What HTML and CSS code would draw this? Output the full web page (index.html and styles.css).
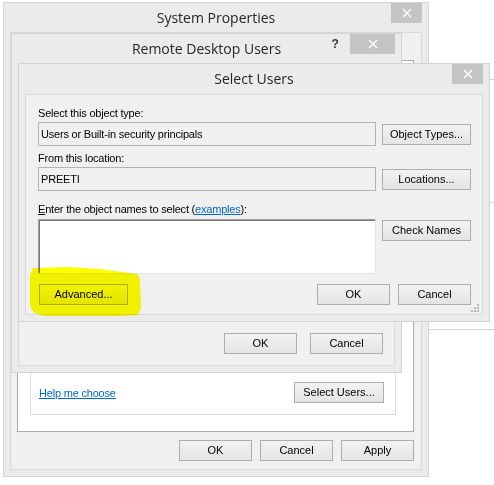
FILE: index.html
```html
<!DOCTYPE html>
<html>
<head>
<meta charset="utf-8">
<title>Select Users</title>
<link rel="stylesheet" href="styles.css">
</head>
<body>
<div class="desk">
  <div class="bgline bgline-a"></div>
  <div class="bgline bgline-b"></div>
  <div class="bgline bgline-c"></div>

  <section class="win sp">
    <header class="tb">
      <span class="ttl">System Properties</span>
      <span class="ctl">
        <span class="close"><svg width="10" height="10" viewBox="0 0 10 10"><path d="M1 1L9 9M9 1L1 9" stroke="#fff" stroke-width="1.4"/></svg></span>
      </span>
    </header>
    <div class="client sp-client">
      <div class="tabpage">
        <div class="group">
          <div class="group-row">
            <a class="link" href="#">Help me choose</a>
            <button class="btn btn-su">Select Users...</button>
          </div>
        </div>
      </div>
      <div class="btnrow">
        <button class="btn btn-std">OK</button>
        <button class="btn btn-std">Cancel</button>
        <button class="btn btn-std">Apply</button>
      </div>
    </div>
  </section>

  <section class="win rdu">
    <header class="tb">
      <span class="ttl">Remote Desktop Users</span>
      <span class="ctl">
        <span class="help">?</span>
        <span class="close close-wide"><svg width="10" height="10" viewBox="0 0 10 10"><path d="M1 1L9 9M9 1L1 9" stroke="#fff" stroke-width="1.4"/></svg></span>
      </span>
    </header>
    <div class="client rdu-client">
      <div class="btnrow btnrow-rdu">
        <button class="btn btn-std">OK</button>
        <button class="btn btn-std">Cancel</button>
      </div>
    </div>
  </section>

  <section class="win su">
    <header class="tb">
      <span class="ttl">Select Users</span>
      <span class="ctl">
        <span class="close"><svg width="10" height="10" viewBox="0 0 10 10"><path d="M1 1L9 9M9 1L1 9" stroke="#fff" stroke-width="1.4"/></svg></span>
      </span>
    </header>
    <div class="client su-client">
      <div class="lbl">Select this object type:</div>
      <div class="row">
        <div class="field">Users or Built-in security principals</div>
        <button class="btn btn-side">Object Types...</button>
      </div>
      <div class="lbl lbl-2">From this location:</div>
      <div class="row">
        <div class="field">PREETI</div>
        <button class="btn btn-side">Locations...</button>
      </div>
      <div class="lbl lbl-3"><u>E</u>nter the object names to select (<a class="link" href="#">examples</a>):</div>
      <div class="row row-big">
        <div class="bigbox"></div>
        <button class="btn btn-side btn-check">Check Names</button>
      </div>
      <div class="actions">
        <button class="btn btn-adv">Advanced...</button>
        <button class="btn btn-std">OK</button>
        <button class="btn btn-std">Cancel</button>
      </div>
      <svg class="grip" width="9" height="9" viewBox="0 0 9 9">
        <rect x="6" y="0" width="2" height="2" fill="#b8b8b8"/>
        <rect x="3" y="3" width="2" height="2" fill="#b8b8b8"/>
        <rect x="6" y="3" width="2" height="2" fill="#b8b8b8"/>
        <rect x="0" y="6" width="2" height="2" fill="#b8b8b8"/>
        <rect x="3" y="6" width="2" height="2" fill="#b8b8b8"/>
        <rect x="6" y="6" width="2" height="2" fill="#b8b8b8"/>
      </svg>
    </div>
  </section>

  <svg class="marker" width="494" height="485" viewBox="0 0 494 485">
    <path d="M33 268 L70 267 L100 269 L122 272 L137 274 L140 279 L141 308 L138 315 L120 316 L45 316 L34 313 L30 306 L30 275 Z" fill="#ffff00"/>
  </svg>
</div>
</body>
</html>
```

FILE: styles.css
```css
* {
  box-sizing: border-box;
}

body {
  margin: 0;
  background: #ffffff;
  font-family: "Liberation Sans", Arial, sans-serif;
  font-size: 11px;
  letter-spacing: -0.2px;
  color: #000000;
}

.desk {
  position: relative;
  width: 494px;
  height: 485px;
  overflow: hidden;
  background: #ffffff;
}

/* faint edges of a window behind, on the right */
.bgline {
  position: absolute;
  background: #d4d4d4;
  height: 1px;
}
.bgline-a { left: 490px; top: 79px; width: 4px; }
.bgline-b { left: 490px; top: 202px; width: 4px; }
.bgline-c { left: 429px; top: 329px; width: 65px; }

/* windows on the desktop */
.win {
  position: absolute;
  display: flex;
  flex-direction: column;
  background: #ebebeb;
  border: 1px solid #d3d3d3;
  padding: 0 6px 6px 6px;
}

.sp { left: 3px; top: 2px; width: 426px; height: 475px; }
.rdu { left: 11px; top: 33px; width: 391px; height: 340px; }
.su { left: 18px; top: 63px; width: 472px; height: 259px; }

.tb {
  flex: none;
  height: 30px;
  display: grid;
  grid-template-columns: 1fr auto 1fr;
}
.sp .tb { height: 29px; }

.ttl {
  grid-column: 2;
  align-self: center;
  font-family: "Open Sans", "Noto Sans", sans-serif;
  font-size: 14px;
  letter-spacing: 0;
  color: #262626;
  white-space: nowrap;
  margin-top: -1px;
}

.ctl {
  grid-column: 3;
  justify-self: end;
  display: flex;
  align-items: flex-start;
}

.close {
  width: 31px;
  height: 20px;
  background: #c4c4c4;
  display: flex;
  align-items: center;
  justify-content: center;
}
.close-wide { width: 45px; }

.help {
  width: 30px;
  height: 20px;
  display: flex;
  align-items: center;
  justify-content: center;
  font-family: "Liberation Sans", Arial, sans-serif;
  font-weight: bold;
  font-size: 12px;
  color: #333333;
}

.client {
  flex: 1;
  min-height: 0;
  display: flex;
  flex-direction: column;
  background: #f0f0f0;
  border: 1px solid #d9d9d9;
}

/* buttons */
.btn {
  font-family: "Liberation Sans", Arial, sans-serif;
  font-size: 11px;
  letter-spacing: 0;
  color: #000000;
  height: 21px;
  padding: 0;
  margin: 0;
  border: 1px solid #adadad;
  background: linear-gradient(#f2f2f2, #e4e4e4);
  text-align: center;
  line-height: 19px;
}
.btn-std { width: 73px; }
.btn-side { width: 89px; margin-top: 2px; flex: none; }
.btn-check { margin-top: 1px; }
.btn-adv { width: 89px; margin-left: 1px; margin-right: auto; }
.btn-su { width: 90px; }

.link {
  color: #0066cc;
  text-decoration: underline;
}

/* System Properties */
.sp-client {
  padding: 27px 7px 8px 6px;
}
.tabpage {
  flex: 1;
  background: #ffffff;
  border: 1px solid #acacac;
  display: flex;
  flex-direction: column;
  justify-content: flex-end;
  padding: 0 17px 16px 12px;
}
.group {
  height: 150px;
  border: 1px solid #dcdcdc;
  display: flex;
  align-items: flex-end;
  padding: 0 11px 11px 8px;
}
.group-row {
  flex: 1;
  display: flex;
  align-items: center;
  justify-content: space-between;
}
.btnrow {
  flex: none;
  display: flex;
  justify-content: flex-end;
  gap: 8px;
  margin-top: 8px;
}

/* Remote Desktop Users */
.rdu-client {
  justify-content: flex-end;
  padding: 0 11px 11px 11px;
}
.btnrow-rdu {
  gap: 13px;
  margin-top: 0;
}

/* Select Users */
.su-client {
  position: relative;
  padding: 12px 11px 9px 12px;
}
.lbl {
  height: 13px;
  line-height: 13px;
  white-space: nowrap;
}
.lbl-2 { margin-top: 6px; }
.lbl-3 { margin-top: 12px; }

.row {
  display: flex;
  align-items: flex-start;
  gap: 6px;
  margin-top: 2px;
}
.row-big { margin-top: 3px; }

.field {
  flex: 1;
  height: 24px;
  border: 1px solid #b4b4b4;
  background: #f0f0f0;
  padding: 0 2px;
  line-height: 22px;
  white-space: nowrap;
}

.bigbox {
  flex: 1;
  height: 55px;
  background: #ffffff;
  border: 1px solid;
  border-color: #a0a0a0 #e3e3e3 #e3e3e3 #a0a0a0;
  box-shadow: inset 1px 1px 0 #7a7a7a;
}

.actions {
  display: flex;
  gap: 8px;
  margin-top: 10px;
}

.grip {
  position: absolute;
  right: 2px;
  bottom: 1px;
}

/* yellow marker annotation */
.marker {
  position: absolute;
  left: 0;
  top: 0;
  pointer-events: none;
  mix-blend-mode: multiply;
}
```
